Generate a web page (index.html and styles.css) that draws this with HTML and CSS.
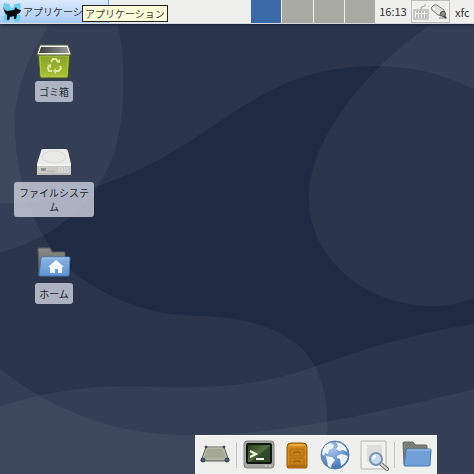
FILE: index.html
```
<!DOCTYPE html>
<html lang="ja">
<head>
    <meta charset="UTF-8">
    <meta name="viewport" content="width=device-width, initial-scale=1.0">
    <title>Xfce</title>
    <link rel="stylesheet" href="styles.css">
</head>
<body>
    <svg class="wallpaper" viewBox="0 0 1422 1422" preserveAspectRatio="xMidYMid slice" aria-hidden="true">
        <g fill="#fff" fill-opacity=".052">
            <path d="M0 0H1422V268C1340 225 1240 198 1120 198C780 200 660 410 380 526C260 575 130 612 0 610Z"/>
            <path d="M0 0H330C368 90 376 210 366 330C350 560 210 700 0 758Z"/>
            <path d="M0 0H200C120 110 30 240 46 420C62 620 140 760 240 832C340 902 450 942 560 946C760 950 840 990 900 1040C975 1110 1000 1240 970 1422H0Z"/>
            <path d="M1422 0C1150 130 926 400 926 590C926 780 1100 918 1302 918C1345 918 1385 908 1422 895Z"/>
            <path d="M0 1220C180 1160 320 1156 460 1160C680 1168 800 1150 950 1098C1100 1045 1240 1000 1422 972V1422H0Z"/>
            <path d="M0 1107C170 1240 360 1306 570 1306C850 1306 1120 1240 1422 1168V1422H0Z"/>
        </g>
    </svg>

    <div class="screen">
        <header class="panel">
            <button class="appMenu">
                <svg width="20" height="20" viewBox="0 0 20 20" aria-hidden="true">
                    <path d="M2 1l5 1 3 5 3-5 5-1 1 4-4 5 4 5-2 4-4 1-3-5-4 5-4-1-1-4 4-5-4-5z" fill="#6bcdee"/>
                    <path d="M1 5l2 3 2 1 7-1 2-3 1 2 4 1-1 3-3 1-1 5h-2v-3l-4 1-1 3H5v-5L3 11z" fill="#080b0d"/>
                </svg>
                <span>アプリケーション</span>
            </button>
            <div class="tooltip" role="tooltip">アプリケーション</div>
            <nav class="pager" aria-label="ワークスペース">
                <button class="active" aria-label="1"></button>
                <button aria-label="2"></button>
                <button aria-label="3"></button>
                <button aria-label="4"></button>
            </nav>
            <time class="clock">16:13</time>
            <div class="tray">
                <svg width="16" height="18" viewBox="0 0 16 18" fill="none" stroke="#a5a5a1" aria-hidden="true">
                    <path d="M8 7V4l4-1V1"/>
                    <rect x="1" y="7" width="14" height="9" fill="#f1f1ef"/>
                    <path d="M3 9h11M3 12h11M3 14h2M6 14h5M12 14h2" stroke="#8c8c88" stroke-dasharray="2 1"/>
                </svg>
                <svg width="18" height="18" viewBox="0 0 18 18" aria-hidden="true">
                    <path d="M9 15h8" stroke="#bbb" stroke-width="2"/>
                    <path d="M1 5l3-3h3l7 5 1 4-4 2-3-1-6-5z" fill="#dededc" stroke="#80807c"/>
                    <path d="M3 5l8 6" stroke="#fff"/>
                    <path d="M10 12l1-3 3-1 2 3-2 3z" fill="#8b8b88" stroke="#555"/>
                    <path d="M14 13l2 2" stroke="#444" stroke-width="2"/>
                </svg>
            </div>
            <button class="user">xfc</button>
        </header>

        <main class="desktop">
            <a class="desktopIcon" href="#trash">
                <svg width="40" height="40" viewBox="0 0 40 40" aria-hidden="true">
                    <defs>
                        <linearGradient id="binFill" x1="0" y1="0" x2="0" y2="1">
                            <stop offset="0" stop-color="#86a028"/>
                            <stop offset="1" stop-color="#a9c138"/>
                        </linearGradient>
                        <linearGradient id="binInside" x1="0" y1="0" x2="1" y2="0">
                            <stop offset="0" stop-color="#3e3f42"/>
                            <stop offset="1" stop-color="#99999c"/>
                        </linearGradient>
                    </defs>
                    <path d="M4 13h32l-2 23q0 1-2 1H8q-2 0-2-1z" fill="url(#binFill)" stroke="#43531b"/>
                    <path d="M6 15h28l-1 20H7z" fill="none" stroke="#c0d65b" stroke-opacity=".6"/>
                    <path d="M6 4h28l3 9q0 1-1 1H4q-1 0-1-1z" fill="#f5f6ee" stroke="#59613f"/>
                    <path d="M7 6h26l2 6H5z" fill="url(#binInside)"/>
                    <g fill="none" stroke="#dbe69c" stroke-width="2">
                        <path d="M17 21l2-3h3l2 3"/>
                        <path d="M26 25l1 2-2 3h-4"/>
                        <path d="M18 30h-3l-1-3 2-3"/>
                    </g>
                    <path d="M22 21l4 1v-4zM22 27v6l-3-3zM13 24l4-1v4z" fill="#dbe69c"/>
                </svg>
                <span>ゴミ箱</span>
            </a>
            <a class="desktopIcon" href="#filesystem">
                <svg width="40" height="40" viewBox="0 0 40 40" aria-hidden="true">
                    <path d="M9 7h23q1 0 2 2l3 13v10q0 1-1 1H4q-1 0-1-1V22L7 9q0-2 2-2z" fill="#ececea"/>
                    <ellipse cx="20" cy="15" rx="12" ry="6" fill="#e9e9e7" stroke="#d6d6d3"/>
                    <path d="M3 24h34v8q0 1-1 1H4q-1 0-1-1z" fill="#c9c9c6"/>
                    <path d="M3 23h34" stroke="#fafafa"/>
                    <path d="M7 26h5v3H7z" fill="#92928f"/>
                    <path d="M13 29h8" stroke="#aaa"/>
                    <path d="M25 25v6M28 25v6M31 25v6M34 25v6" stroke="#e0e0dd"/>
                    <path d="M4 32h32" stroke="#aaaaa7"/>
                </svg>
                <span>ファイルシステム</span>
            </a>
            <a class="desktopIcon" href="#home">
                <svg width="40" height="40" viewBox="0 0 40 40" aria-hidden="true">
                    <defs>
                        <linearGradient id="folderBack" x1="0" y1="0" x2="0" y2="1">
                            <stop offset="0" stop-color="#8b8d89"/>
                            <stop offset="1" stop-color="#555753"/>
                        </linearGradient>
                        <linearGradient id="folderFront" x1="0" y1="0" x2="0" y2="1">
                            <stop offset="0" stop-color="#8ab2e0"/>
                            <stop offset="1" stop-color="#6096d3"/>
                        </linearGradient>
                    </defs>
                    <path d="M4 6q0-1 1-1h11l2 4h12q1 0 1 1v22H5z" fill="url(#folderBack)" stroke="#5b5d5a"/>
                    <path d="M8 14h27q1 0 1 1l-1 17q0 1-1 1H6q-1 0-1-1l2-17z" fill="url(#folderFront)" stroke="#4777b0"/>
                    <path d="M8 15h27" stroke="#a9c9ee"/>
                    <path d="M22 17l8 7h-2v6h-4v-4h-3v4h-5v-6h-2z" fill="#f4f7fb"/>
                </svg>
                <span>ホーム</span>
            </a>
        </main>

        <footer class="dock">
            <button aria-label="デスクトップの表示">
                <svg width="32" height="32" viewBox="0 0 32 32" aria-hidden="true">
                    <path d="M7 8h18l5 14H2z" fill="#a5a995" stroke="#5f6258"/>
                    <path d="M8 9h16l4 11H4z" fill="none" stroke="#bec2ad"/>
                    <g fill="#4d5e7c" stroke="#2f3d57">
                        <circle cx="7" cy="8" r="1"/>
                        <circle cx="25" cy="8" r="1"/>
                        <circle cx="4" cy="21" r="2"/>
                        <circle cx="28" cy="21" r="2"/>
                    </g>
                </svg>
            </button>
            <span class="separator"></span>
            <button aria-label="ターミナル">
                <svg width="32" height="32" viewBox="0 0 32 32" aria-hidden="true">
                    <defs>
                        <linearGradient id="crt" x1="0" y1="0" x2="1" y2="1">
                            <stop offset="0" stop-color="#24391f"/>
                            <stop offset=".5" stop-color="#55713f"/>
                            <stop offset=".55" stop-color="#34492b"/>
                            <stop offset="1" stop-color="#2f4427"/>
                        </linearGradient>
                    </defs>
                    <rect x="1" y="2" width="30" height="27" rx="3" fill="#a6a8a2" stroke="#85877f"/>
                    <rect x="4" y="5" width="24" height="19" rx="1" fill="url(#crt)" stroke="#10170e" stroke-width="2"/>
                    <path d="M7 12l6 3-6 3M13 20h8" fill="none" stroke="#f1f5ed" stroke-width="2"/>
                    <path d="M22 27h2M26 27h2" stroke="#e6e6e1"/>
                </svg>
            </button>
            <button aria-label="ファイルマネージャー">
                <svg width="32" height="32" viewBox="0 0 32 32" aria-hidden="true">
                    <path d="M6 8q0-4 4-4h12q4 0 4 4v19q0 2-1 2H7q-1 0-1-2z" fill="#cf8a1c" stroke="#8f5902"/>
                    <path d="M8 7q0-2 3-2h10q3 0 3 2z" fill="#eead3f"/>
                    <path d="M6 26h20v3H6z" fill="#ab6b0b"/>
                    <path d="M9 10h14v7H9zM9 19h14v7H9z" fill="#c98115" stroke="#a86d12"/>
                    <path d="M13 15v-2h6v2M13 24v-2h6v2" fill="none" stroke="#8a5808"/>
                </svg>
            </button>
            <button aria-label="ウェブブラウザー">
                <svg width="32" height="32" viewBox="0 0 32 32" aria-hidden="true">
                    <defs>
                        <radialGradient id="ocean" cx=".4" cy=".3" r=".8">
                            <stop offset="0" stop-color="#a9c7eb"/>
                            <stop offset="1" stop-color="#3267ab"/>
                        </radialGradient>
                    </defs>
                    <circle cx="16" cy="16" r="14" fill="url(#ocean)" stroke="#5e7ea9"/>
                    <path d="M4 10q2-5 8-6l3 2-1 3-4 2-1 4-3-1-1 3-2-2zM7 17l6 1 3 3-3 4-1 4-3-2-1-5zM17 3l6 2 4 4 1 4-4-2-4 1-3-2 2-3zM18 17l4-2 5 1 2 2-3 6-4 3-1-7-3-1z" fill="#edf2f7"/>
                </svg>
            </button>
            <button aria-label="アプリケーションファインダー">
                <svg width="32" height="32" viewBox="0 0 32 32" aria-hidden="true">
                    <rect x="4" y="2" width="25" height="28" rx="1" fill="#f1f1ef" stroke="#b4b5b1"/>
                    <rect x="10" y="6" width="15" height="17" fill="#dddeda"/>
                    <path d="M24 25l6 5" stroke="#777974" stroke-width="4" stroke-linecap="round"/>
                    <path d="M24 25l6 5" stroke="#d2d3cf" stroke-width="2" stroke-linecap="round"/>
                    <circle cx="19" cy="20" r="6" fill="#c8dcf1" stroke="#7d94b1" stroke-width="2"/>
                    <path d="M16 20q0-3 3-3" fill="none" stroke="#fff" stroke-width="2"/>
                </svg>
            </button>
            <span class="separator"></span>
            <button aria-label="フォルダー">
                <svg width="32" height="32" viewBox="0 0 32 32" aria-hidden="true">
                    <path d="M2 4q0-1 1-1h9l2 3h11q1 0 1 1v18H3z" fill="#7b7d79" stroke="#666864"/>
                    <path d="M6 10h23q1 0 1 1l-1 15q0 1-1 1H4q-1 0-1-1l2-15z" fill="#719fd7" stroke="#4777b0"/>
                    <path d="M6 11h23" stroke="#a9c9ee"/>
                </svg>
            </button>
        </footer>
    </div>
</body>
</html>
```
FILE: styles.css
```
* {
    box-sizing: border-box;
}
body {
    margin: 0;
    font-family: "Noto Sans CJK JP", sans-serif;
    font-size: 10px;
    line-height: 14px;
    color: #2e3436;
    background: #1f2b43;
}
button {
    border: none;
    padding: 0;
    font: inherit;
    color: inherit;
    background: none;
    cursor: pointer;
}
svg {
    display: block;
    flex: none;
}
.wallpaper {
    position: absolute;
    top: 0;
    left: 0;
    width: 100%;
    height: 100%;
}
.screen {
    position: relative;
    display: flex;
    flex-direction: column;
    min-height: 100vh;
}

/* top panel */
.panel {
    position: relative;
    display: flex;
    height: 24px;
    background: #efefed;
    border-bottom: 1px solid #d5d8dc;
    box-shadow: 0 1px 3px #121a2a;
}
.appMenu {
    display: flex;
    align-items: center;
    gap: 1px;
    width: 109px;
    padding-left: 2px;
    white-space: nowrap;
    background: linear-gradient(#dbe9fb, #a9cbf7);
    border-right: 1px solid #6f9fdb;
}
.tooltip {
    position: absolute;
    top: 5px;
    left: 82px;
    padding: 0 2px;
    line-height: 15px;
    white-space: nowrap;
    color: #3a3a32;
    background: #fdfddc;
    border: 1px solid #222;
}
.pager {
    display: grid;
    grid-template-columns: repeat(4, 1fr);
    gap: 1px;
    width: 124px;
    margin-left: auto;
}
.pager button {
    background: #a9a9a4;
}
.pager .active {
    background: #3a69a7;
}
.clock {
    width: 36px;
    font-size: 11px;
    line-height: 23px;
    text-align: center;
}
.tray {
    display: flex;
    align-items: center;
    justify-content: center;
    gap: 1px;
    width: 39px;
    border: 1px solid #bdbdb9;
}
.user {
    width: 24px;
    padding-left: 5px;
    font-size: 11px;
    text-align: left;
}

/* desktop icons */
.desktop {
    flex: 1;
    display: flex;
    flex-direction: column;
    align-items: flex-start;
    padding: 17px 14px 0;
}
.desktopIcon {
    display: flex;
    flex-direction: column;
    align-items: center;
    width: 80px;
    height: 101px;
    color: #23282a;
    text-align: center;
    text-decoration: none;
}
.desktopIcon span {
    padding: 4px 4px 3px;
    background: rgba(205, 210, 222, 0.8);
    border-radius: 3px;
}

/* bottom dock */
.dock {
    align-self: flex-end;
    display: flex;
    align-items: center;
    height: 39px;
    margin-right: 37px;
    padding: 0 1px;
    background: #efefed;
    border-top: 1px solid #fff;
}
.dock button {
    display: flex;
    justify-content: center;
    width: 38px;
}
.separator {
    width: 1px;
    height: 26px;
    margin: 0 3px 0 2px;
    background: #c4c4c0;
}
```
